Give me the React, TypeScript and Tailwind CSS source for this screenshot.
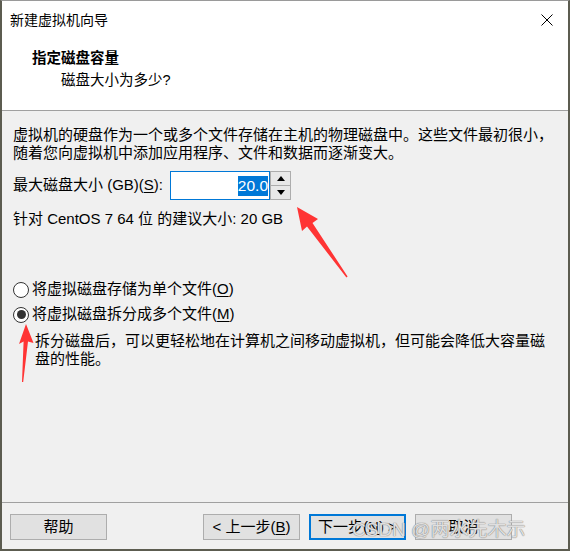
import React from "react";

const FONT = "font-['Liberation_Sans','Noto_Sans_CJK_SC',sans-serif]";

function Key({ k }: { k: string }) {
  return (
    <>
      (<span className="underline underline-offset-2">{k}</span>)
    </>
  );
}

function Radio({ checked }: { checked?: boolean }) {
  return (
    <span className="w-[16px] h-[16px] rounded-full border border-[#333333] bg-white flex items-center justify-center shrink-0">
      {checked && <span className="w-[9px] h-[9px] rounded-full bg-[#333333]" />}
    </span>
  );
}

function Btn({ children, focused }: { children: React.ReactNode; focused?: boolean }) {
  return (
    <div
      className={`w-[97px] h-[26px] flex items-center justify-center bg-[#e1e1e1] text-[15px] text-black ${
        focused ? "border-2 border-[#0078d7]" : "border border-[#adadad]"
      }`}
    >
      {children}
    </div>
  );
}

export default function App() {
  return (
    <div
      className={`relative w-[570px] h-[551px] flex flex-col border-l-2 border-r-2 border-b-2 border-t border-[#5c5c50] border-t-[#9a9a9a] bg-[#f0f0f0] text-black ${FONT} select-none overflow-hidden`}
    >
      {/* Title bar + header */}
      <div className="bg-white border-b border-[#a0a0a0]">
        <div className="h-[38px] flex items-center justify-between pl-[8px] pr-[15px]">
          <span className="text-[14px]">新建虚拟机向导</span>
          <svg width="12" height="12" viewBox="0 0 12 12">
            <path d="M0.5 0.5 L11.5 11.5 M11.5 0.5 L0.5 11.5" stroke="#000" strokeWidth="1" />
          </svg>
        </div>
        <div className="h-[71px] pt-[8px] text-[14.5px] leading-[22px]">
          <div className="pl-[30px] font-bold">指定磁盘容量</div>
          <div className="pl-[59px]">磁盘大小为多少?</div>
        </div>
      </div>

      {/* Body */}
      <div className="flex-1 px-[11px] pt-[15px] text-[15px]">
        <p className="leading-[18px]">
          虚拟机的硬盘作为一个或多个文件存储在主机的物理磁盘中。这些文件最初很小，
          <br />
          随着您向虚拟机中添加应用程序、文件和数据而逐渐变大。
        </p>

        <div className="mt-[9px] h-[29px] flex items-center">
          <span className="w-[157px] shrink-0">
            最大磁盘大小 (GB)<Key k="S" />:
          </span>
          <div className="w-[100px] h-[29px] bg-white border border-[#0078d7] flex items-center justify-end pr-px">
            <span className="bg-[#0078d7] text-white leading-[20px] text-[15.5px]">20.0</span>
          </div>
          <div className="w-[21px] h-[29px] border border-[#adadad] bg-[#e8e8e8] flex flex-col">
            <div className="flex-1 flex items-center justify-center border-b border-[#adadad]">
              <svg width="8" height="5" viewBox="0 0 8 5">
                <path d="M4 0 L8 5 L0 5 Z" fill="#000" />
              </svg>
            </div>
            <div className="flex-1 flex items-center justify-center">
              <svg width="8" height="5" viewBox="0 0 8 5">
                <path d="M0 0 L8 0 L4 5 Z" fill="#000" />
              </svg>
            </div>
          </div>
        </div>

        <p className="mt-[10px] leading-[18px]">针对 CentOS 7 64 位 的建议大小: 20 GB</p>

        <div className="mt-[49px] h-[25px] flex items-center gap-[3px]">
          <Radio />
          <span>
            将虚拟磁盘存储为单个文件<Key k="O" />
          </span>
        </div>
        <div className="h-[25px] flex items-center gap-[3px]">
          <Radio checked />
          <span>
            将虚拟磁盘拆分成多个文件<Key k="M" />
          </span>
        </div>
        <p className="mt-[5px] pl-[22px] leading-[18px]">
          拆分磁盘后，可以更轻松地在计算机之间移动虚拟机，但可能会降低大容量磁
          <br />
          盘的性能。
        </p>
      </div>

      {/* Footer */}
      <div className="h-[47px] border-t border-[#a0a0a0] pt-[11px] pl-[8px] flex items-start">
        <Btn>帮助</Btn>
        <div className="ml-[96px] flex gap-[9px]">
          <Btn>
            &lt; 上一步<Key k="B" />
          </Btn>
          <Btn focused>
            下一步<Key k="N" /> &gt;
          </Btn>
          <Btn>取消</Btn>
        </div>
      </div>

      {/* Watermark */}
      <div className="absolute left-[350px] top-[515px] text-[19px] text-white/75 [text-shadow:0_0_1px_#808080,0_0_1px_#808080] pointer-events-none">
        CSDN @两水先木示
      </div>

      {/* Red annotation arrows */}
      <svg className="absolute left-[-2px] top-[-1px] pointer-events-none" width="570" height="551" viewBox="0 0 570 551">
        <polygon
          points="297,207 318,219 312.5,223 347.6,276.5 346.4,277.5 307,226.5 302,231"
          fill="#ff3434"
        />
        <polygon points="26,324 33.5,343 28,341.5 23.2,382 22,382 23.6,341.5 19,344" fill="#ff3434" />
      </svg>
    </div>
  );
}
